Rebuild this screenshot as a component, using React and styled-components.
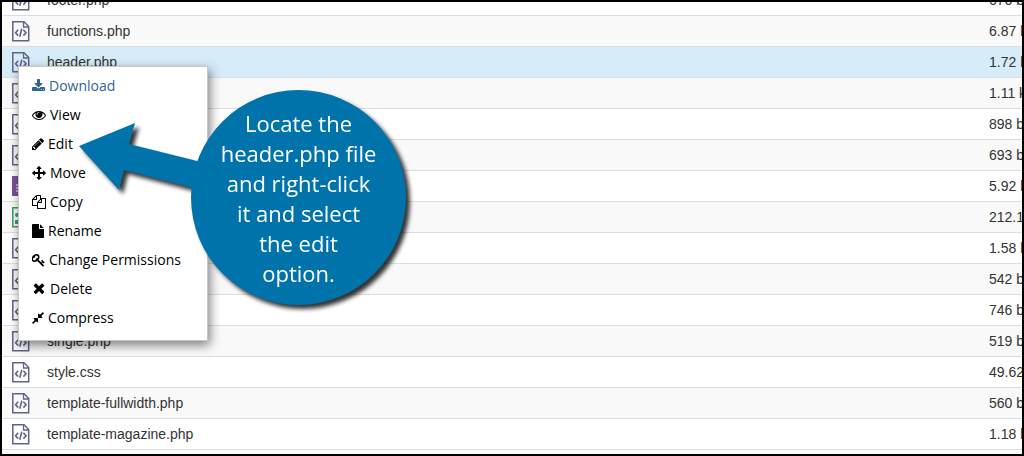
import React from "react";
import styled, { createGlobalStyle, css } from "styled-components";

const GlobalStyle = createGlobalStyle`
  * {
    box-sizing: border-box;
  }
  body {
    margin: 0;
  }
`;

const FILES = [
  { name: "footer.php", size: "676 b" },
  { name: "functions.php", size: "6.87 k" },
  { name: "header.php", size: "1.72 k", selected: true },
  { name: "", size: "1.11 k" },
  { name: "", size: "898 b" },
  { name: "", size: "693 b" },
  { name: "", size: "5.92 k", type: "text" },
  { name: "", size: "212.1", type: "image" },
  { name: "", size: "1.58 k" },
  { name: "", size: "542 b" },
  { name: "", size: "746 b" },
  { name: "single.php", size: "519 b" },
  { name: "style.css", size: "49.62" },
  { name: "template-fullwidth.php", size: "560 b" },
  { name: "template-magazine.php", size: "1.18 k" },
  { name: "", size: "", type: "none" },
];

// box is the part of the 1792 unit grid that the glyph takes, width is in px
const ACTIONS = [
  {
    label: "Download",
    active: true,
    box: "64 0 1664 1792",
    width: 13,
    path: "M1344 1344q0-26-19-45t-45-19-45 19-19 45 19 45 45 19 45-19 19-45zm256 0q0-26-19-45t-45-19-45 19-19 45 19 45 45 19 45-19 19-45zm128-224v320q0 40-28 68t-68 28h-1472q-40 0-68-28t-28-68v-320q0-40 28-68t68-28h465l135 136q58 56 136 56t136-56l136-136h464q40 0 68 28t28 68zm-325-569q17 41-14 70l-448 448q-18 19-45 19t-45-19l-448-448q-31-29-14-70 17-39 59-39h256v-448q0-26 19-45t45-19h256q26 0 45 19t19 45v448h256q42 0 59 39z",
  },
  {
    label: "View",
    box: "0 0 1792 1792",
    width: 14,
    path: "M1664 960q-152-236-381-353 61 104 61 225 0 185-131.5 316.5t-316.5 131.5-316.5-131.5-131.5-316.5q0-121 61-225-229 117-381 353 133 205 333.5 326.5t434.5 121.5 434.5-121.5 333.5-326.5zm-720-384q0-20-14-34t-34-14q-125 0-214.5 89.5t-89.5 214.5q0 20 14 34t34 14 34-14 14-34q0-86 61-147t147-61q20 0 34-14t14-34zm848 384q0 34-20 69-140 230-376.5 368.5t-499.5 138.5-499.5-139-376.5-368q-20-35-20-69t20-69q140-229 376.5-368t499.5-139 499.5 139 376.5 368q20 35 20 69z",
  },
  {
    label: "Edit",
    box: "128 0 1536 1792",
    width: 12,
    path: "M491 1536l91-91-235-235-91 91v107h128v128h107zm523-928q0-22-22-22-10 0-17 7l-542 542q-7 7-7 17 0 22 22 22 10 0 17-7l542-542q7-7 7-17zm-54-192l416 416-832 832h-416v-416zm683 96q0 53-37 90l-166 166-416-416 166-165q36-38 90-38 53 0 91 38l235 234q37 39 37 91z",
  },
  {
    label: "Move",
    box: "0 0 1792 1792",
    width: 14,
    path: "M1792 896q0 26-19 45l-256 256q-19 19-45 19t-45-19-19-45v-128h-384v384h128q26 0 45 19t19 45-19 45l-256 256q-19 19-45 19t-45-19l-256-256q-19-19-19-45t19-45 45-19h128v-384h-384v128q0 26-19 45t-45 19-45-19l-256-256q-19-19-19-45t19-45l256-256q19-19 45-19t45 19 19 45v128h384v-384h-128q-26 0-45-19t-19-45 19-45l256-256q19-19 45-19t45 19l256 256q19 19 19 45t-19 45-45 19h-128v384h384v-128q0-26 19-45t45-19 45 19l256 256q19 19 19 45z",
  },
  {
    label: "Copy",
    box: "0 0 1792 1792",
    width: 14,
    path: "M1696 384q40 0 68 28t28 68v1216q0 40-28 68t-68 28h-960q-40 0-68-28t-28-68v-288h-544q-40 0-68-28t-28-68v-672q0-40 20-88t48-76l408-408q28-28 76-48t88-20h416q40 0 68 28t28 68v328q68-40 128-40h416zm-544 213l-299 299h299v-299zm-640-384l-299 299h299v-299zm196 647l316-316v-416h-384v416q0 40-28 68t-68 28h-416v640h512v-256q0-40 20-88t48-76zm956 804v-1152h-384v416q0 40-28 68t-68 28h-416v640h896z",
  },
  {
    label: "Rename",
    box: "128 0 1536 1792",
    width: 12,
    path: "M1152 512v-472q22 14 36 28l408 408q14 14 28 36h-472zm-128 32q0 40 28 68t68 28h544v1056q0 40-28 68t-68 28h-1344q-40 0-68-28t-28-68v-1600q0-40 28-68t68-28h800v544z",
  },
  {
    label: "Change Permissions",
    box: "64 0 1664 1792",
    width: 13,
    path: "M832 512q0-80-56-136t-136-56-136 56-56 136q0 42 19 83-41-19-83-19-80 0-136 56t-56 136 56 136 136 56 136-56 56-136q0-42-19-83 41 19 83 19 80 0 136-56t56-136zm851 704q0 17-49 66t-66 49q-9 0-28.5-16t-36.5-33-38.5-40-24.5-26l-96 96 220 220q28 28 28 68 0 42-39 81t-81 39q-40 0-68-28l-671-671q-176 131-365 131-163 0-265.5-102.5t-102.5-265.5q0-160 95-313t248-248 313-95q163 0 265.5 102.5t102.5 265.5q0 189-131 365l355 355 96-96q-3-3-26-24.5t-40-38.5-33-36.5-16-28.5q0-17 49-66t66-49q13 0 23 10 6 6 46 44.5t82 79.5 86.5 86 73 78 28.5 41z",
  },
  {
    label: "Delete",
    box: "96 192 1600 1600",
    width: 14,
    path: "M1490 1322q0 40-28 68l-136 136q-28 28-68 28t-68-28l-294-294-294 294q-28 28-68 28t-68-28l-136-136q-28-28-28-68t28-68l294-294-294-294q-28-28-28-68t28-68l136-136q28-28 68-28t68 28l294 294 294-294q28-28 68-28t68 28l136 136q28 28 28 68t-28 68l-294 294 294 294q28 28 28 68z",
  },
  {
    label: "Compress",
    box: "128 0 1536 1792",
    width: 12,
    path: "M896 960v448q0 26-19 45t-45 19-45-19l-144-144-332 332q-10 10-23 10t-23-10l-114-114q-10-10-10-23t10-23l332-332-144-144q-19-19-19-45t19-45 45-19h448q26 0 45 19t19 45zm755-672q0 13-10 23l-332 332 144 144q19 19 19 45t-19 45-45 19h-448q-26 0-45-19t-19-45v-448q0-26 19-45t45-19 45 19l144 144 332-332q10-10 23-10t23 10l114 114q10 10 10 23z",
  },
];

const Frame = styled.main`
  position: relative;
  height: 100vh;
  overflow: hidden;
  border: 2px solid #000;
  background: #fff;
`;

// the list is scrolled a little, so its first row starts above the frame
const FileTable = styled.table`
  width: 100%;
  margin-top: -17px;
  table-layout: fixed;
  border-collapse: separate;
  border-spacing: 0;
  font: 14px/20px "Liberation Sans", Arial, sans-serif;
  color: #333;
`;

const FileRow = styled.tr`
  background: #fff;

  &:nth-child(even) {
    background: #f9f9f9;
  }

  ${({ $selected }) => $selected && css`
    && {
      background: #d7ecf9;
    }
  `}
`;

const Cell = styled.td`
  width: ${({ $width }) => $width || "auto"};
  height: 31px;
  padding: 0;
  border-bottom: 1px solid #ddd;
  white-space: nowrap;
`;

const IconCell = styled(Cell)`
  padding-left: 10px;

  svg {
    display: block;
  }
`;

const Menu = styled.div`
  position: absolute;
  top: 64px;
  left: 16px;
  display: flex;
  flex-direction: column;
  width: 190px;
  padding: 4px 0 8px;
  border: 1px solid #c8c8c0;
  background: #fff;
  box-shadow: 2px 4px 10px rgba(0, 0, 0, 0.5);
`;

const MenuItem = styled.button`
  display: flex;
  align-items: center;
  gap: 4px;
  height: 29px;
  padding: 0 13px;
  border: 0;
  background: none;
  color: ${({ $active }) => ($active ? "#2f6497" : "#000")};
  font: 14px/20px "Open Sans", "Noto Sans", sans-serif;
  text-align: left;
  white-space: nowrap;
`;

const Callout = styled.div`
  position: absolute;
  top: 88px;
  left: 77px;
  padding-left: 112px;
  filter: drop-shadow(4px 4px 2px rgba(0, 0, 0, 0.8));
`;

const Arrow = styled.svg`
  position: absolute;
  top: 32px;
  left: 0;
`;

const Bubble = styled.p`
  position: relative;
  display: flex;
  align-items: center;
  justify-content: center;
  width: 215px;
  height: 215px;
  margin: 0;
  border-radius: 50%;
  background: #0073ab;
  color: #fff;
  font: 22px/30px "Open Sans", "Noto Sans", sans-serif;
  text-align: center;
  white-space: pre-line;
`;

const CodeIcon = () => (
  <svg width="18" height="21" viewBox="0 0 18 21" fill="none" stroke="#5f6488">
    <path d="M.8 .8H12L16.7 5.500V19.700H.8Z" strokeWidth="1.500" />
    <path d="M11.500 1V6H16.500" strokeWidth="1.300" />
    <path d="M6.200 8.800L3.600 11.700 6.200 14.600M11.400 8.800L14 11.700 11.400 14.600M9.800 7.600L7.800 15.800" strokeWidth="1.600" />
  </svg>
);

const TextIcon = () => (
  <svg width="18" height="21" viewBox="0 0 18 21">
    <path d="M0 0H12L17 5V20H0Z" fill="#7b519d" />
    <path d="M4 9H13M4 12H13M4 15H13" stroke="#fff" strokeWidth="1.200" />
  </svg>
);

const ImageIcon = () => (
  <svg width="18" height="21" viewBox="0 0 18 21" fill="none" stroke="#3d9970">
    <path d="M.8 .8H16.700V19.700H.8Z" strokeWidth="1.500" />
    <circle cx="5" cy="8" r="2" fill="#3d9970" stroke="none" />
    <path d="M3 17V13H6L8 15 11 11 14 17Z" fill="#3d9970" stroke="none" />
  </svg>
);

const ICONS = { code: CodeIcon, text: TextIcon, image: ImageIcon, none: () => null };

const FileList = () => (
  <FileTable>
    <tbody>
      {FILES.map(({ name, size, type = "code", selected }, i) => {
        const Icon = ICONS[type];
        return (
          <FileRow key={i} $selected={selected}>
            <IconCell $width="45px"><Icon /></IconCell>
            <Cell>{name}</Cell>
            <Cell $width="33px">{size}</Cell>
          </FileRow>
        );
      })}
    </tbody>
  </FileTable>
);

const ContextMenu = () => (
  <Menu>
    {ACTIONS.map(({ label, active, box, width, path }) => (
      <MenuItem key={label} type="button" $active={active}>
        <svg width={width} height="14" viewBox={box} fill="currentColor" aria-hidden="true">
          <path d={path} />
        </svg>
        {label}
      </MenuItem>
    ))}
  </Menu>
);

const App = () => (
  <>
    <GlobalStyle />
    <Frame>
      <FileList />
      <ContextMenu />
      <Callout>
        <Arrow width="130" height="70" viewBox="0 0 130 70" fill="#0073ab">
          <path d="M0 24L56 1 50 22 130 42V70L45 48 40 68Z" />
        </Arrow>
        <Bubble>
          {"Locate the\nheader.php file\nand right-click\nit and select\nthe edit\noption."}
        </Bubble>
      </Callout>
    </Frame>
  </>
);

export default App;
